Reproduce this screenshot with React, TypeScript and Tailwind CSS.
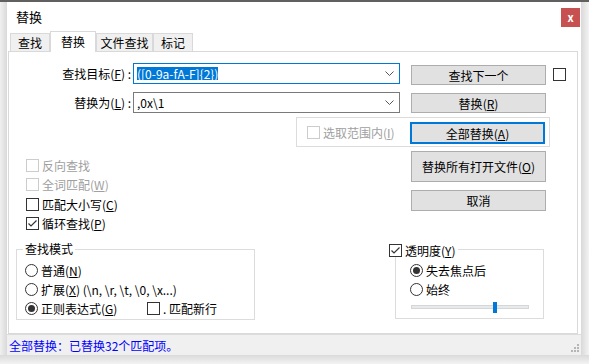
import React from 'react';

const font = { fontFamily: '"Noto Sans CJK SC", "Noto Sans", sans-serif' };

function Mn({ text, k, after }: { text: string; k?: string; after?: string }) {
  return (
    <span>
      {text}
      {k && (
        <>
          (<span className="underline underline-offset-1">{k}</span>)
        </>
      )}
      {after}
    </span>
  );
}

function Check({ checked = false, disabled = false }: { checked?: boolean; disabled?: boolean }) {
  return (
    <span
      className={`flex h-[13px] w-[13px] shrink-0 items-center justify-center border bg-white ${
        disabled ? 'border-[#cccccc]' : 'border-[#333333]'
      }`}
    >
      {checked && (
        <svg width="11" height="11" viewBox="0 0 11 11">
          <polyline points="1.5,5.5 4,8 9.5,2.5" fill="none" stroke="#333" strokeWidth="1.2" />
        </svg>
      )}
    </span>
  );
}

function CheckRow({
  label,
  k,
  checked,
  disabled,
  className = '',
}: {
  label: string;
  k?: string;
  checked?: boolean;
  disabled?: boolean;
  className?: string;
}) {
  return (
    <div className={`flex h-[13px] items-center gap-[3px] ${className}`}>
      <Check checked={checked} disabled={disabled} />
      <span className={`text-[12px] leading-[13px] ${disabled ? 'text-[#a0a0a0]' : 'text-black'}`}>
        <Mn text={label} k={k} />
      </span>
    </div>
  );
}

function Radio({
  label,
  k,
  after,
  checked = false,
  className = '',
}: {
  label: string;
  k?: string;
  after?: string;
  checked?: boolean;
  className?: string;
}) {
  return (
    <div className={`flex h-[13px] items-center gap-[3px] ${className}`}>
      <span className="flex h-[13px] w-[13px] shrink-0 items-center justify-center rounded-full border border-[#333333] bg-white">
        {checked && <span className="h-[7px] w-[7px] rounded-full bg-[#333333]" />}
      </span>
      <span className="whitespace-pre text-[12px] leading-[13px] text-black">
        <Mn text={label} k={k} after={after} />
      </span>
    </div>
  );
}

function Btn({ children, className = '' }: { children: React.ReactNode; className?: string }) {
  return (
    <div
      className={`flex w-[135px] shrink-0 items-center justify-center bg-[#e1e1e1] text-[12px] leading-[13px] text-black ${className}`}
    >
      {children}
    </div>
  );
}

function Chevron() {
  return (
    <svg width="9" height="5" viewBox="0 0 9 5" className="mr-[5px]">
      <polyline points="0.5,0.5 4.5,4.5 8.5,0.5" fill="none" stroke="#555" strokeWidth="1" />
    </svg>
  );
}

export default function App() {
  return (
    <div className="flex h-[364px] w-[589px] flex-col overflow-hidden bg-[#f3f3f3]" style={font}>
      <div className="h-[2px] bg-[#606060]" />
      <div className="flex flex-1">
        <div className="w-[7px] bg-gradient-to-r from-[#f0f0f0] to-[#d9d9d9]" />
        <div className="flex w-[574px] flex-col bg-white">
          {/* title bar */}
          <div className="flex h-[29px] items-start justify-between pl-[9px] pr-[1px]">
            <span className="mt-[8px] text-[13px] leading-[13px] text-black">替换</span>
            <div className="mt-[6px] flex h-[19px] w-[19px] items-center justify-center bg-[#c75050] text-[11px] font-bold leading-none text-white">
              x
            </div>
          </div>

          {/* tabs */}
          <div className="flex h-[20px] items-end pl-[3px] text-[12px] leading-[13px] text-black">
            <div className="flex h-[18px] w-[40px] items-center justify-center border-x border-t border-[#d9d9d9] bg-[#f0f0f0]">查找</div>
            <div className="relative z-10 -mb-px flex h-[21px] w-[46px] items-center justify-center border-x border-t border-[#d9d9d9] bg-white pb-[2px]">
              替换
            </div>
            <div className="flex h-[18px] w-[57px] items-center justify-center border-x border-t border-[#d9d9d9] bg-[#f0f0f0]">文件查找</div>
            <div className="flex h-[18px] w-[40px] items-center justify-center border-x border-t border-[#d9d9d9] bg-[#f0f0f0]">标记</div>
          </div>

          {/* panel */}
          <div className="ml-[1px] mr-[3px] h-[283px] border border-[#d9d9d9] bg-white">
            {/* find what */}
            <div className="mt-[11px] flex h-[22px] items-start">
              <div className="mt-[4px] w-[122px] text-right text-[12px] leading-[13px] text-black">
                <Mn text="查找目标" k="F" /> :
              </div>
              <div className="ml-[2px] flex h-[21px] w-[267px] items-center justify-between border border-[#0078d7] bg-white pl-[3px]">
                <span className="bg-[#0078d7] text-[12px] leading-[13px] text-white">([0-9a-fA-F]{'{'}2{'}'})</span>
                <Chevron />
              </div>
              <Btn className="ml-[11px] mt-[2px] h-[20px] border border-[#adadad]">查找下一个</Btn>
              <div className="ml-[7px] mt-[5px]">
                <Check />
              </div>
            </div>

            {/* replace with */}
            <div className="mt-[7px] flex h-[22px] items-start">
              <div className="mt-[4px] w-[122px] text-right text-[12px] leading-[13px] text-black">
                <Mn text="替换为" k="L" /> :
              </div>
              <div className="ml-[2px] flex h-[21px] w-[267px] items-center justify-between border border-[#7a7a7a] bg-white pl-[3px]">
                <span className="text-[12px] leading-[13px] text-black">,0x\1</span>
                <Chevron />
              </div>
              <Btn className="ml-[11px] mt-[1px] h-[20px] border border-[#adadad]">
                <Mn text="替换" k="R" />
              </Btn>
            </div>

            {/* in selection */}
            <div className="ml-[287px] mt-[3px] flex h-[30px] w-[254px] items-start border border-[#dcdcdc]">
              <div className="w-[113px] pl-[10px] pt-[8px]">
                <CheckRow label="选取范围内" k="I" disabled />
              </div>
              <Btn className="mt-[4px] h-[22px] border-2 border-[#0078d7]">
                <Mn text="全部替换" k="A" />
              </Btn>
            </div>

            {/* lower part */}
            <div className="flex">
              <div className="flex w-[380px] flex-col">
                <CheckRow className="ml-[17px] mt-[12px]" label="反向查找" disabled />
                <CheckRow className="ml-[17px] mt-[6px]" label="全词匹配" k="W" disabled />
                <CheckRow className="ml-[17px] mt-[7px]" label="匹配大小写" k="C" />
                <CheckRow className="ml-[17px] mt-[6px]" label="循环查找" k="P" checked />

                <div className="relative ml-[7px] mt-[19px] h-[71px] w-[239px] border border-[#dcdcdc] pl-[8px]">
                  <span className="absolute left-[6px] top-[-8px] bg-white px-[2px] text-[12px] leading-[13px] text-black">查找模式</span>
                  <Radio className="mt-[14px]" label="普通" k="N" />
                  <Radio className="mt-[6px]" label="扩展" k="X" after=" (\n, \r, \t, \0, \x...)" />
                  <div className="mt-[6px] flex">
                    <div className="w-[122px]">
                      <Radio label="正则表达式" k="G" checked />
                    </div>
                    <CheckRow label=". 匹配新行" />
                  </div>
                </div>
              </div>

              <div className="flex flex-col">
                <Btn className="ml-[22px] mt-[4px] h-[31px] border border-[#adadad]">
                  <Mn text="替换所有打开文件" k="O" />
                </Btn>
                <Btn className="ml-[22px] mt-[8px] h-[21px] border border-[#adadad]">取消</Btn>

                <div className="relative ml-[6px] mt-[38px] h-[70px] w-[149px] border border-[#dcdcdc] pl-[14px]">
                  <div className="absolute left-[-7px] top-[-6px] bg-white pr-[2px]">
                    <CheckRow label="透明度" k="Y" checked />
                  </div>
                  <Radio className="mt-[14px]" label="失去焦点后" checked />
                  <Radio className="mt-[6px]" label="始终" />
                  <div className="relative ml-[1px] mt-[9px] h-[4px] w-[118px] border border-[#d6d6d6] bg-[#e7eaea]">
                    <span className="absolute left-[81px] top-[-4px] h-[11px] w-[4px] bg-[#0078d7]" />
                  </div>
                </div>
              </div>
            </div>
          </div>

          {/* status bar */}
          <div className="relative flex h-[21px] items-center border-t border-[#dcdcdc] bg-[#f0f0f0] pl-[2px]">
            <span className="text-[12px] leading-[13px] text-[#0000ff]">全部替换：已替换32个匹配项。</span>
            <svg width="9" height="9" viewBox="0 0 9 9" className="absolute bottom-[2px] right-[1px]">
              <rect x="6" y="0" width="2" height="2" fill="#b5b5b5" />
              <rect x="3" y="3" width="2" height="2" fill="#b5b5b5" />
              <rect x="6" y="3" width="2" height="2" fill="#b5b5b5" />
              <rect x="0" y="6" width="2" height="2" fill="#b5b5b5" />
              <rect x="3" y="6" width="2" height="2" fill="#b5b5b5" />
              <rect x="6" y="6" width="2" height="2" fill="#b5b5b5" />
            </svg>
          </div>
        </div>
        <div className="w-[8px] bg-gradient-to-r from-[#d9d9d9] to-[#f3f3f3]" />
      </div>
      <div className="h-[9px] bg-gradient-to-b from-[#dadada] to-[#f3f3f3]" />
    </div>
  );
}
